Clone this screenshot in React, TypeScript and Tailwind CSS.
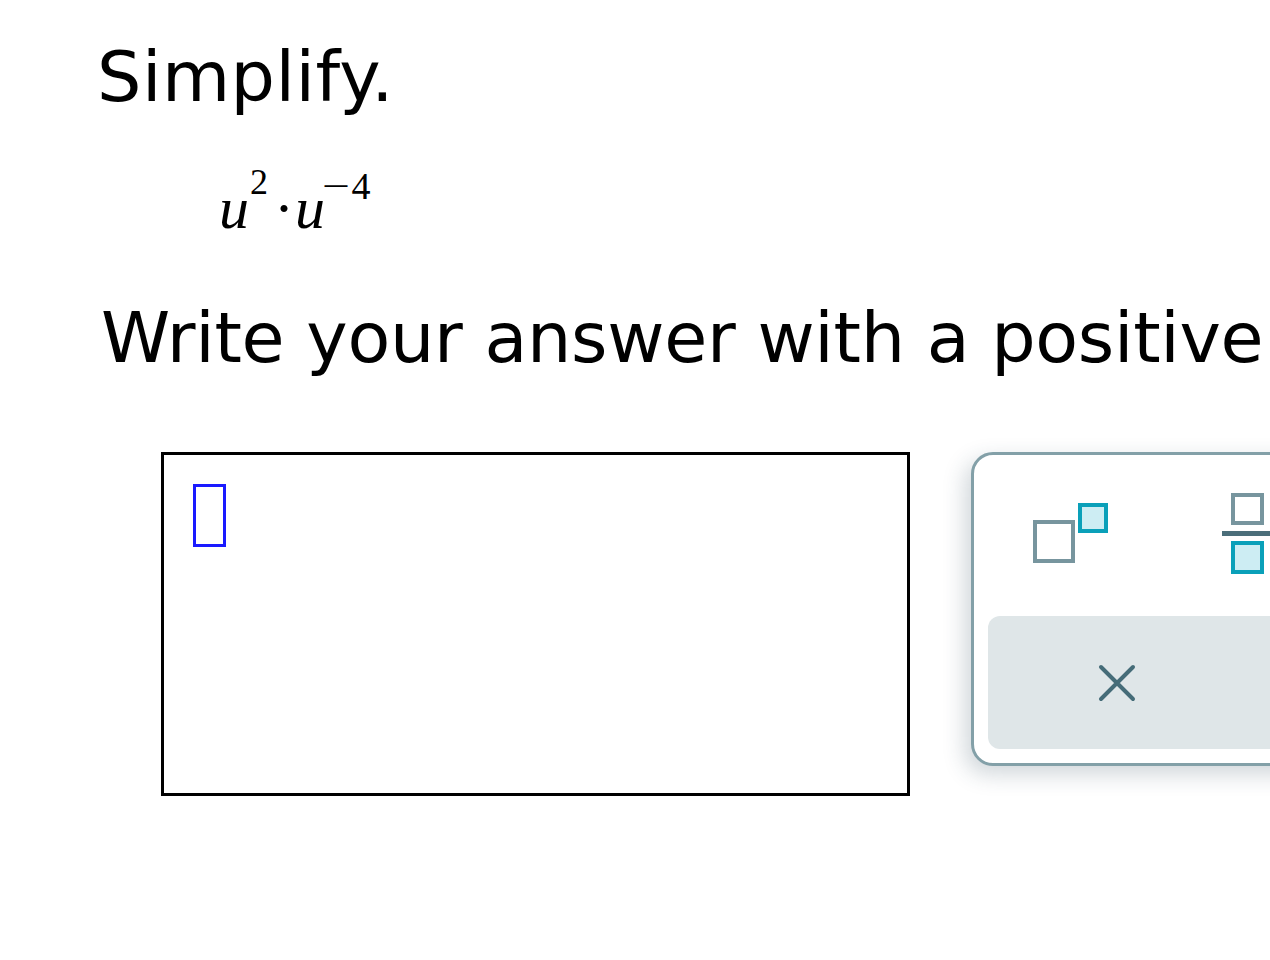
import React from "react";

const Sup = ({ children, className }: { children: React.ReactNode; className: string }) => (
  <span className={`relative inline-block not-italic ${className}`}>{children}</span>
);

function SuperscriptIcon() {
  return (
    <div className="flex items-start">
      <div className="mt-[17px] w-[42px] h-[43px] border-[4px] border-[#77959e] bg-white" />
      <div className="ml-[3px] w-[30px] h-[30px] border-[4px] border-[#0aa0b9] bg-[#cdedf3]" />
    </div>
  );
}

function FractionIcon() {
  return (
    <div className="flex flex-col items-center w-[51px]">
      <div className="w-[33px] h-[32px] border-[4px] border-[#77959e] bg-white" />
      <div className="mt-[6px] w-full h-[5px] bg-[#4b6e7a]" />
      <div className="mt-[5px] w-[33px] h-[33px] border-[4px] border-[#0aa0b9] bg-[#cdedf3]" />
    </div>
  );
}

export default function App() {
  return (
    <div className="w-[1270px] h-[960px] overflow-hidden bg-white text-black font-['DejaVu_Sans',sans-serif]">
      <div className="pt-[42px] pl-[97px] text-[70px] leading-none tracking-[0.5px]">Simplify.</div>

      {/* expression */}
      <div className="mt-[66px] pl-[219px] h-[70px] text-[60px] leading-none font-['Liberation_Serif',serif] whitespace-nowrap">
        <span className="italic">u</span>
        <Sup className="text-[36px] -top-[34px] ml-[1px]">2</Sup>
        <span className="ml-[6px]">·</span>
        <span className="italic ml-[1px]">u</span>
        <Sup className="text-[38px] -top-[29px] -ml-[3px]">
          <span className="inline-block scale-x-[1.3] origin-left mr-[8px]">−</span>4
        </Sup>
      </div>

      <div className="mt-[55px] pl-[101px] text-[70px] leading-none tracking-[-0.3px] whitespace-nowrap">
        Write your answer with a positive exponent only.
      </div>

      <div className="mt-[79px] flex items-start">
        {/* answer box */}
        <div className="ml-[161px] w-[749px] h-[344px] shrink-0 border-[3px] border-black pl-[29px] pt-[29px]">
          <div className="w-[33px] h-[63px] border-[3px] border-[#1a1aff]" />
        </div>

        {/* palette */}
        <div className="ml-[61px] w-[600px] h-[314px] shrink-0 rounded-[22px] border-[3px] border-[#83a0a8] bg-white px-[14px] pb-[14px] shadow-[-6px_8px_22px_rgba(40,70,85,0.22)]">
          <div className="h-[161px] pb-[5px] flex items-center">
            <div className="ml-[45px]">
              <SuperscriptIcon />
            </div>
            <div className="ml-[114px]">
              <FractionIcon />
            </div>
          </div>
          <div className="h-[133px] rounded-[12px] bg-[#dfe6e8] flex items-center">
            <svg className="ml-[110px]" width="38" height="38" viewBox="0 0 38 38">
              <path d="M3 3 L35 35 M35 3 L3 35" stroke="#456c78" strokeWidth="4" strokeLinecap="round" fill="none" />
            </svg>
          </div>
        </div>
      </div>
    </div>
  );
}
